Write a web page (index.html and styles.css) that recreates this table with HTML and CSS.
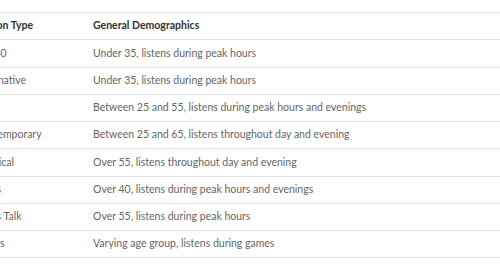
FILE: index.html
```html
<!DOCTYPE html>
<html>
<head>
<meta charset="utf-8">
<link rel="stylesheet" href="styles.css">
</head>
<body>
<div class="wrap">
<table class="tbl">
<thead>
<tr><th class="c1">Station Type</th><th>General Demographics</th></tr>
</thead>
<tbody>
<tr><td class="c1">Top 40</td><td>Under 35, listens during peak hours</td></tr>
<tr><td class="c1">Alternative</td><td>Under 35, listens during peak hours</td></tr>
<tr><td class="c1">Rock</td><td>Between 25 and 55, listens during peak hours and evenings</td></tr>
<tr><td class="c1">Contemporary</td><td>Between 25 and 65, listens throughout day and evening</td></tr>
<tr><td class="c1">Classical</td><td>Over 55, listens throughout day and evening</td></tr>
<tr><td class="c1">News</td><td>Over 40, listens during peak hours and evenings</td></tr>
<tr><td class="c1">News Talk</td><td>Over 55, listens during peak hours</td></tr>
<tr><td class="c1">Sports</td><td>Varying age group, listens during games</td></tr>
</tbody>
</table>
</div>
</body>
</html>
```
FILE: styles.css
```css
html, body { margin: 0; padding: 0; background: #fff; }
body { font-family: Lato, "Liberation Sans", sans-serif; }
.wrap { margin-top: 12px; margin-left: -32px; width: 600px; }
.tbl { border-collapse: collapse; width: 100%; font-size: 10.5px; line-height: 1.5; }
.tbl th, .tbl td { text-align: left; padding: 5.25px 7px; border-top: 1px solid #e6e6e6; }
.tbl tbody tr:last-child td { border-bottom: 1px solid #e6e6e6; }
.tbl th { font-weight: bold; color: #333; }
.tbl td { color: #666; }
.tbl .c1 { width: 104px; }
```
